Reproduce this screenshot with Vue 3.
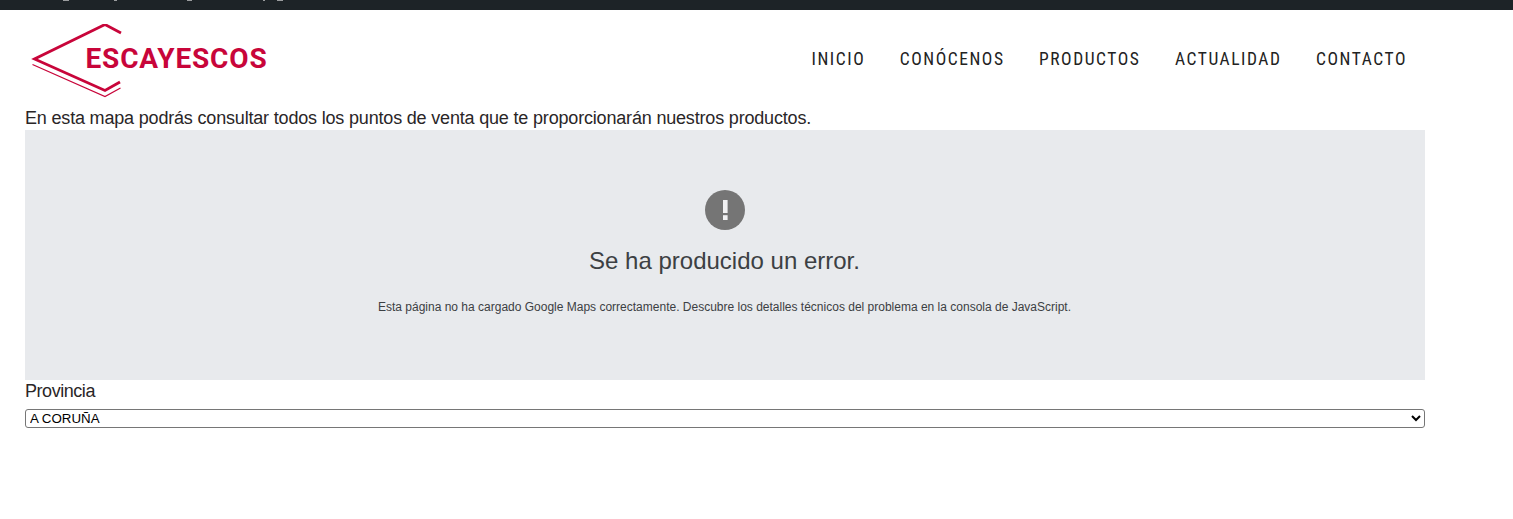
<script setup>
const links = ['INICIO', 'CONÓCENOS', 'PRODUCTOS', 'ACTUALIDAD', 'CONTACTO']
const marks = [
  { left: 63, width: 6 },
  { left: 114, width: 3 },
  { left: 187, width: 5 },
  { left: 263, width: 2 },
  { left: 277, width: 6 }
]
</script>

<template>
  <div class="page">
    <div class="topbar">
      <i v-for="m in marks" :key="m.left" class="mark-dot" :style="{ left: m.left + 'px', width: m.width + 'px' }"></i>
    </div>
    <header class="header">
      <div class="logo">
        <svg class="mark" width="100" height="80" viewBox="0 0 100 80" fill="none" stroke="#c8053a">
          <path d="M90 9 L74 0.5 L3.5 35 L74 66.5 L89 58" stroke-width="2.8" />
          <path d="M1.5 40.5 L74 72.5 L89.5 64" stroke-width="1.3" />
        </svg>
        <span class="brand">ESCAYESCOS</span>
      </div>
      <nav class="nav">
        <a v-for="l in links" :key="l">{{ l }}</a>
      </nav>
    </header>
    <main class="main">
      <p class="intro">En esta mapa podrás consultar todos los puntos de venta que te proporcionarán nuestros productos.</p>
      <section class="map">
        <svg class="icon" width="40" height="40" viewBox="0 0 40 40">
          <circle cx="20" cy="20" r="20" fill="#757575" />
          <rect x="18" y="10" width="4.6" height="13" fill="#f1f1f3" />
          <rect x="18" y="25.2" width="4.6" height="4.8" fill="#f1f1f3" />
        </svg>
        <h2>Se ha producido un error.</h2>
        <p>Esta página no ha cargado Google Maps correctamente. Descubre los detalles técnicos del problema en la consola de JavaScript.</p>
      </section>
      <label class="label" for="prov">Provincia</label>
      <select id="prov" class="select">
        <option>A CORUÑA</option>
      </select>
    </main>
  </div>
</template>

<style>
html, body { background: #fff; }
</style>
<style scoped>
.page { height: 519px; overflow: hidden; font-family: "Liberation Sans", Arial, sans-serif; }
.topbar { position: relative; height: 10px; background: #1d2327; }
.mark-dot { position: absolute; top: 0; height: 1px; background: #9a9c9e; }
.header { height: 96px; display: flex; align-items: center; justify-content: space-between; padding: 0 106px 0 31px; }
.logo { position: relative; width: 240px; height: 74px; margin-top: 6px; }
.mark { position: absolute; left: 0; top: 0; }
.brand { position: absolute; left: 54.5px; top: 18px; font: 700 28px/34px "Roboto", sans-serif; color: #c8053a; letter-spacing: 0.85px; }
.nav { display: flex; gap: 34.5px; margin-top: 2px; }
.nav a { font: 400 17.5px/22px "Roboto", sans-serif; font-stretch: 75%; letter-spacing: 1.55px; color: #222; }
.main { padding: 0 88px 0 25px; }
.intro { margin: 0; font-size: 18px; line-height: 24px; letter-spacing: -0.18px; color: #2a2627; }
.map { height: 250px; background: #e8eaed; display: flex; flex-direction: column; align-items: center; padding: 60px 1px 0 0; box-sizing: border-box; color: #3c4043; }
.map h2 { margin: 15px 0 0; font-size: 24px; line-height: 32px; font-weight: 400; }
.map p { margin: 22px 0 0; font-size: 12px; line-height: 16px; }
.label { display: block; font-size: 18px; line-height: 22px; letter-spacing: -0.45px; color: #2a2627; }
.select { display: block; width: 100%; height: 19px; margin-top: 7px; font: 13.33px "Liberation Sans", sans-serif; color: #000; background: #fff; border: 1px solid #767676; border-radius: 3px; }
</style>
